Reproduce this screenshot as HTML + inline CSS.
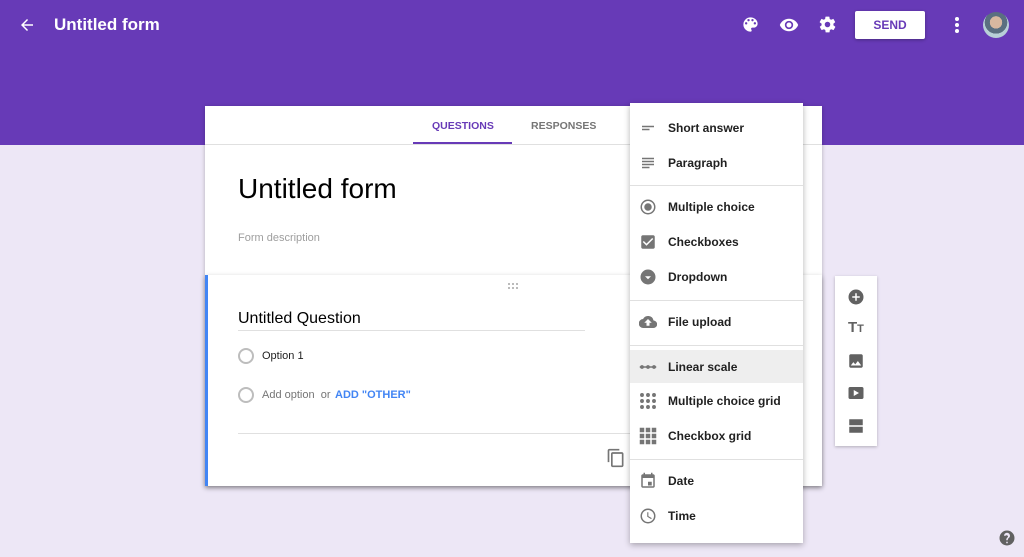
<!DOCTYPE html>
<html><head><meta charset="utf-8"><style>
*{margin:0;padding:0;box-sizing:border-box}
body{width:1024px;height:557px;overflow:hidden;background:#ede7f6;font-family:"Liberation Sans",sans-serif;position:relative}
.a{position:absolute}
.hdr{left:0;top:0;width:1024px;height:145px;background:#673ab7}
.t{white-space:nowrap}
.mi{position:absolute;left:0;width:173px;height:35px}
.mi span{position:absolute;left:38px;top:10px;font-size:12px;font-weight:bold;color:#212121}
.mi svg{position:absolute;left:9px;top:8px}
.dv{position:absolute;left:0;width:173px;height:1px;background:#e0e0e0}
</style></head><body>
<div class="a hdr"></div>
<svg class="a" style="left:18px;top:16px" width="18" height="18" viewBox="0 0 24 24"><path d="M20 11H7.8l5.6-5.6L12 4l-8 8 8 8 1.4-1.4L7.8 13H20z" fill="#fff"/></svg>
<div class="a t" style="left:54px;top:15px;color:#fff;font-size:17px;font-weight:bold">Untitled form</div>
<svg class="a" style="left:741px;top:15px" width="19" height="19" viewBox="0 0 24 24"><path fill="#fff" d="M12 3a9 9 0 000 18c.8 0 1.5-.7 1.5-1.5 0-.4-.2-.7-.4-1-.2-.3-.4-.6-.4-1 0-.8.7-1.5 1.5-1.5H16c2.8 0 5-2.2 5-5 0-4.4-4-8-9-8zm-5.5 9a1.5 1.5 0 110-3 1.5 1.5 0 010 3zm3-4a1.5 1.5 0 110-3 1.5 1.5 0 010 3zm5 0a1.5 1.5 0 110-3 1.5 1.5 0 010 3zm3 4a1.5 1.5 0 110-3 1.5 1.5 0 010 3z"/></svg>
<svg class="a" style="left:779px;top:15px" width="20" height="20" viewBox="0 0 24 24"><path fill="#fff" d="M12 4.5C7 4.5 2.7 7.6 1 12c1.7 4.4 6 7.5 11 7.5s9.3-3.1 11-7.5c-1.7-4.4-6-7.5-11-7.5zm0 12.5a5 5 0 110-10 5 5 0 010 10zm0-8a3 3 0 100 6 3 3 0 000-6z"/></svg>
<svg class="a" style="left:818px;top:15px" width="19" height="19" viewBox="0 0 24 24"><path fill="#fff" d="M19.4 13c.1-.3.1-.7.1-1s0-.7-.1-1l2.1-1.7c.2-.1.2-.4.1-.6l-2-3.5c-.1-.2-.4-.3-.6-.2l-2.5 1c-.5-.4-1.1-.7-1.700-1l-.4-2.600c0-.2-.2-.4-.5-.4h-4c-.2 0-.4.2-.5.4l-.4 2.6c-.6.3-1.2.6-1.7 1l-2.5-1c-.2-.1-.5 0-.6.2l-2 3.5c-.1.2-.1.5.1.6L4.6 11c0 .3-.1.7-.1 1s0 .7.1 1l-2.1 1.7c-.2.1-.2.4-.1.6l2 3.5c.1.2.4.3.6.2l2.5-1c.5.4 1.1.7 1.7 1l.4 2.6c0 .2.2.4.5.4h4c.2 0 .4-.2.5-.4l.4-2.6c.6-.3 1.2-.6 1.7-1l2.5 1c.2.1.5 0 .6-.2l2-3.5c.1-.2.1-.5-.1-.6L19.4 13zM12 15.5a3.5 3.5 0 110-7 3.5 3.5 0 010 7z"/></svg>
<div class="a" style="left:855px;top:11px;width:70px;height:28px;background:#fff;border-radius:2px;box-shadow:0 1px 3px rgba(0,0,0,.3);color:#673ab7;font-size:12px;font-weight:bold;text-align:center;line-height:28px">SEND</div>
<div class="a" style="left:955px;top:17px;width:4px;height:4px;border-radius:50%;background:#fff;box-shadow:0 6px 0 #fff,0 12px 0 #fff"></div>
<div class="a" style="left:983px;top:12px;width:26px;height:26px;border-radius:50%;background:radial-gradient(circle at 50% 40%,#d8b8a0 0 30%,#5a6f80 31% 55%,#b8cfd8 56%)"></div>

<div class="a" style="left:205px;top:106px;width:617px;height:380px;background:#fff;box-shadow:0 1px 4px rgba(0,0,0,.25)"></div>
<div class="a t" style="left:432px;top:120px;font-size:10.5px;font-weight:bold;color:#673ab7">QUESTIONS</div>
<div class="a t" style="left:531px;top:120px;font-size:10.5px;font-weight:bold;color:#757575">RESPONSES</div>
<div class="a" style="left:413px;top:142px;width:99px;height:2px;background:#673ab7"></div>
<div class="a" style="left:205px;top:144px;width:617px;height:1px;background:#e0e0e0"></div>
<div class="a t" style="left:238px;top:173px;font-size:28px;color:#000">Untitled form</div>
<div class="a t" style="left:238px;top:232px;font-size:11px;color:#9e9e9e">Form description</div>
<div class="a" style="left:205px;top:275px;width:617px;height:211px;background:#fff;border-left:3px solid #4285f4;box-shadow:0 2px 5px rgba(0,0,0,.3)"></div>
<div class="a" style="left:508px;top:283px;width:2px;height:2px;background:#bbb;box-shadow:4px 0 #bbb,8px 0 #bbb,0 4px #bbb,4px 4px #bbb,8px 4px #bbb"></div>
<div class="a t" style="left:238px;top:310px;font-size:16px;color:#000">Untitled Question</div>
<div class="a" style="left:238px;top:330px;width:347px;height:1px;background:#e0e0e0"></div>
<div class="a" style="left:238px;top:348px;width:16px;height:16px;border:2px solid #bdbdbd;border-radius:50%"></div>
<div class="a t" style="left:262px;top:350px;font-size:11px;color:#212121">Option 1</div>
<div class="a" style="left:238px;top:387px;width:16px;height:16px;border:2px solid #bdbdbd;border-radius:50%"></div>
<div class="a t" style="left:262px;top:389px;font-size:11px;color:#757575">Add option&nbsp; or</div>
<div class="a t" style="left:335px;top:389px;font-size:11px;font-weight:bold;color:#4285f4">ADD "OTHER"</div>
<div class="a" style="left:238px;top:433px;width:400px;height:1px;background:#e0e0e0"></div>
<svg class="a" style="left:606px;top:448px" width="20" height="20" viewBox="0 0 24 24"><path fill="#757575" d="M16 1H4c-1.1 0-2 .9-2 2v14h2V3h12V1zm3 4H8c-1.1 0-2 .9-2 2v14c0 1.1.9 2 2 2h11c1.1 0 2-.9 2-2V7c0-1.1-.9-2-2-2zm0 16H8V7h11v14z"/></svg>

<div class="a" style="left:835px;top:276px;width:42px;height:170px;background:#fff;box-shadow:0 1px 3px rgba(0,0,0,.25)"></div>
<svg class="a" style="left:847px;top:288px" width="18" height="18" viewBox="0 0 24 24"><path fill="#616161" d="M12 2a10 10 0 100 20 10 10 0 000-20zm5 11h-4v4h-2v-4H7v-2h4V7h2v4h4z"/></svg>
<div class="a t" style="left:848px;top:319px;font-size:15px;font-weight:bold;color:#616161">T<span style="font-size:11px">T</span></div>
<svg class="a" style="left:847px;top:352px" width="18" height="18" viewBox="0 0 24 24"><path fill="#616161" d="M21 19V5c0-1.1-.9-2-2-2H5c-1.1 0-2 .9-2 2v14c0 1.1.9 2 2 2h14c1.1 0 2-.9 2-2zM8.5 13.5l2.5 3 3.5-4.5 4.5 6H5l3.5-4.5z"/></svg>
<svg class="a" style="left:847px;top:384px" width="18" height="18" viewBox="0 0 24 24"><path fill="#616161" d="M20 4H4c-1.1 0-2 .9-2 2v12c0 1.1.9 2 2 2h16c1.1 0 2-.9 2-2V6c0-1.1-.9-2-2-2zM9 16V8l7 4z"/></svg>
<svg class="a" style="left:847px;top:417px" width="18" height="18" viewBox="0 0 24 24"><path fill="#616161" d="M3 3h18v8H3zM3 13h18v8H3z"/></svg>

<div class="a" style="left:630px;top:103px;width:173px;height:440px;background:#fff;box-shadow:0 2px 6px rgba(0,0,0,.3)">
<div class="mi" style="top:8px"><svg width="18" height="18" viewBox="0 0 24 24"><path fill="#757575" d="M4 9h16v2H4zm0 4h10v2H4z"/></svg><span>Short answer</span></div>
<div class="mi" style="top:43px"><svg width="18" height="18" viewBox="0 0 24 24"><path fill="#757575" d="M4 5h16v2H4zm0 4h16v2H4zm0 4h16v2H4zm0 4h10v2H4z"/></svg><span>Paragraph</span></div>
<div class="dv" style="top:82px"></div>
<div class="mi" style="top:87px"><svg width="18" height="18" viewBox="0 0 24 24"><path fill="#757575" d="M12 7a5 5 0 100 10 5 5 0 000-10zm0-5a10 10 0 100 20 10 10 0 000-20zm0 18a8 8 0 110-16 8 8 0 010 16z"/></svg><span>Multiple choice</span></div>
<div class="mi" style="top:122px"><svg width="18" height="18" viewBox="0 0 24 24"><path fill="#757575" d="M19 3H5c-1.1 0-2 .9-2 2v14c0 1.1.9 2 2 2h14c1.1 0 2-.9 2-2V5c0-1.1-.9-2-2-2zm-9 14l-5-5 1.4-1.4 3.6 3.6 7.6-7.6L19 8z"/></svg><span>Checkboxes</span></div>
<div class="mi" style="top:157px"><svg width="18" height="18" viewBox="0 0 24 24"><path fill="#757575" d="M12 2a10 10 0 100 20 10 10 0 000-20zm0 13l-4-4h8z"/></svg><span>Dropdown</span></div>
<div class="dv" style="top:197px"></div>
<div class="mi" style="top:202px"><svg width="18" height="18" viewBox="0 0 24 24"><path fill="#757575" d="M19.4 10A7.5 7.5 0 005.4 8 6 6 0 006 20h13a5 5 0 00.4-10zM14 13v4h-4v-4H7l5-5 5 5z"/></svg><span>File upload</span></div>
<div class="dv" style="top:242px"></div>
<div class="mi" style="top:247px;background:#eeeeee;height:33px"><svg width="18" height="18" viewBox="0 0 24 24"><path fill="#757575" d="M1 11h22v2H1z"/><circle cx="4" cy="12" r="2.5" fill="#757575"/><circle cx="12" cy="12" r="2.5" fill="#757575"/><circle cx="20" cy="12" r="2.5" fill="#757575"/></svg><span>Linear scale</span></div>
<div class="mi" style="top:281px"><svg width="18" height="18" viewBox="0 0 24 24" fill="#757575"><circle cx="4" cy="4" r="2.6"/><circle cx="12" cy="4" r="2.6"/><circle cx="20" cy="4" r="2.6"/><circle cx="4" cy="12" r="2.6"/><circle cx="12" cy="12" r="2.6"/><circle cx="20" cy="12" r="2.6"/><circle cx="4" cy="20" r="2.6"/><circle cx="12" cy="20" r="2.6"/><circle cx="20" cy="20" r="2.6"/></svg><span>Multiple choice grid</span></div>
<div class="mi" style="top:316px"><svg width="18" height="18" viewBox="0 0 24 24" fill="#757575"><path d="M1 1h6v6H1zm8 0h6v6H9zm8 0h6v6h-6zM1 9h6v6H1zm8 0h6v6H9zm8 0h6v6h-6zM1 17h6v6H1zm8 0h6v6H9zm8 0h6v6h-6z"/></svg><span>Checkbox grid</span></div>
<div class="dv" style="top:356px"></div>
<div class="mi" style="top:361px"><svg width="18" height="18" viewBox="0 0 24 24"><path fill="#757575" d="M19 3h-1V1h-2v2H8V1H6v2H5c-1.1 0-2 .9-2 2v14c0 1.1.9 2 2 2h14c1.1 0 2-.9 2-2V5c0-1.1-.9-2-2-2zm0 16H5V8h14zm-7-6h5v5h-5z"/></svg><span>Date</span></div>
<div class="mi" style="top:396px"><svg width="18" height="18" viewBox="0 0 24 24"><path fill="#757575" d="M12 2a10 10 0 100 20 10 10 0 000-20zm0 18a8 8 0 110-16 8 8 0 010 16zm.5-13H11v6l5.2 3.2.8-1.3-4.5-2.7z"/></svg><span>Time</span></div>
</div>

<svg class="a" style="left:998px;top:529px" width="18" height="18" viewBox="0 0 24 24"><path fill="#616161" d="M12 2a10 10 0 100 20 10 10 0 000-20zm1 17h-2v-2h2zm2.1-7.7l-.9.9C13.4 13 13 13.5 13 15h-2v-.5c0-1.1.4-2.1 1.2-2.8l1.2-1.3A2 2 0 0010 9H8a4 4 0 018 0c0 .9-.4 1.7-.9 2.3z"/></svg>
</body></html>
